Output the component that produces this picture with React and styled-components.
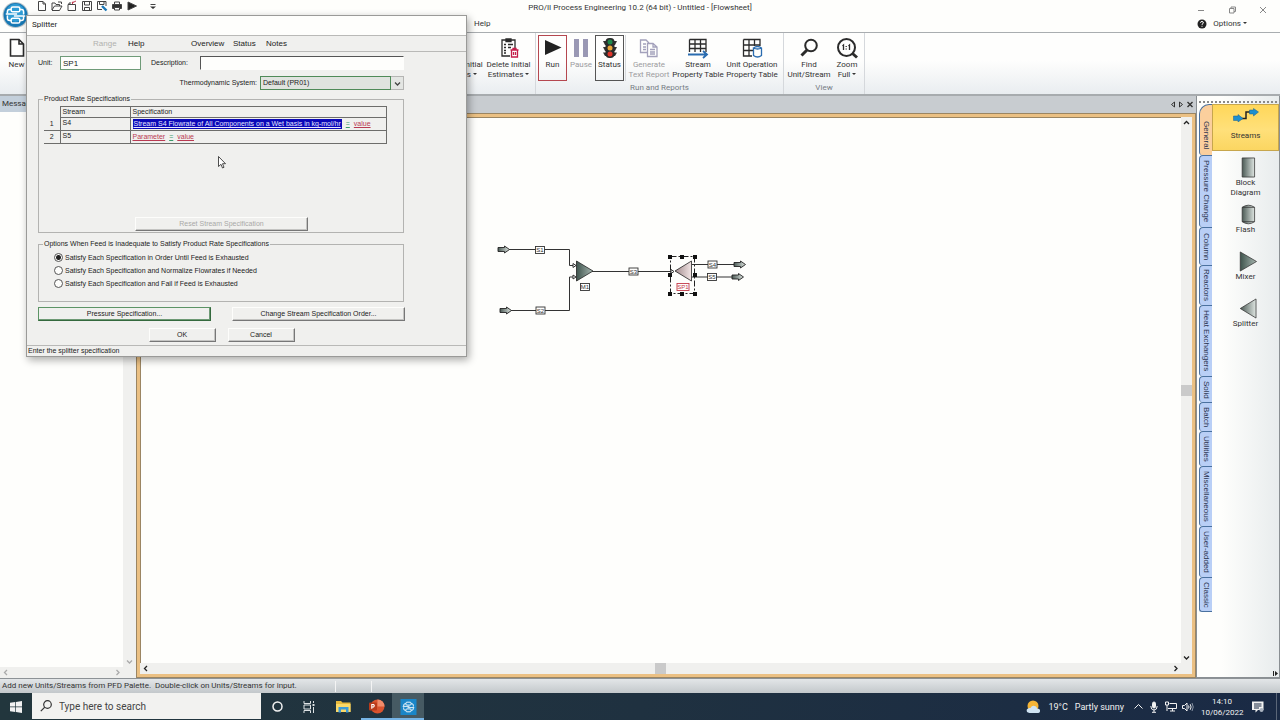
import React, { useState } from 'react';
import styled, { createGlobalStyle, css } from 'styled-components';

const GlobalStyle = createGlobalStyle`
  * {
    box-sizing: border-box;
  }
  body {
    margin: 0;
    background: #fefefc;
    color: #333;
    font-family: Roboto, 'Open Sans', sans-serif;
    font-size: 8px;
    line-height: 10px;
  }
  button, input, select {
    font: inherit;
    color: inherit;
  }
  button {
    margin: 0;
    padding: 0;
    border: none;
    background: none;
  }
  svg {
    display: block;
    flex: none;
  }
`;

const Screen = styled.div`
  position: relative;
  min-height: 100vh;
  display: flex;
  flex-direction: column;
  overflow: hidden;
`;

/* ---------- title bar and menu ---------- */

const TitleBar = styled.header`
  display: grid;
  grid-template-columns: 1fr auto 1fr;
  align-items: center;
  height: 16px;
`;

const QuickAccess = styled.div`
  display: flex;
  align-items: center;
  gap: 3px;
  padding: 0 0 4px 36px;
  button:last-child {
    margin-left: 6px;
  }
`;

const AppTitle = styled.h1`
  margin: 0;
  font-size: 8px;
  font-weight: 400;
`;

const WindowButtons = styled.div`
  display: flex;
  justify-content: flex-end;
  gap: 19px;
  padding: 3px 11px 0 0;
`;

const MenuBar = styled.nav`
  display: flex;
  justify-content: space-between;
  align-items: center;
  height: 17px;
  padding: 0 33px 0 474px;
  border-bottom: 1px solid #a9adb0;
`;

const MenuButton = styled.button`
  display: flex;
  align-items: center;
  gap: 6px;
`;

const AppBadge = styled.div`
  position: absolute;
  left: 2px;
  top: 1px;
`;

const Caret = styled.span`
  display: inline-block;
  margin-left: 2px;
  vertical-align: 2px;
  border: 2px solid transparent;
  border-top-color: #333;
  border-bottom: none;
`;

/* ---------- ribbon ---------- */

const Ribbon = styled.div`
  display: flex;
  height: 63px;
  background: linear-gradient(#fefefd 45%, #e9edf0);
  border-bottom: 2px solid #a7abae;
`;

const Group = styled.section`
  display: flex;
  flex-direction: column;
  justify-content: space-between;
  width: ${p => p.$width}px;
  padding: 2px 0 1px;
  border-right: 1px solid #d5d8dc;
`;

const Tools = styled.div`
  display: flex;
  justify-content: ${p => p.$justify || 'flex-start'};
  height: 46px;
  padding-left: ${p => p.$indent || 0}px;
`;

const GroupName = styled.div`
  color: #777d85;
  text-align: center;
`;

const Tool = styled.button`
  display: flex;
  flex-direction: column;
  align-items: center;
  gap: 1px;
  width: ${p => p.$width}px;
  padding-top: 1px;
  border: 1px solid ${p => p.$border || 'transparent'};
  color: ${p => (p.disabled ? '#9c9ca0' : '#333')};
  white-space: nowrap;
`;

const Divider = styled.span`
  width: 1px;
  margin: 0 1px;
  background: #d5d8dc;
`;

/* ---------- work area ---------- */

const Work = styled.main`
  flex: 1;
  display: grid;
  grid-template-columns: 136px minmax(0, 1fr) 84px;
  background: #f0f0ee;
`;

const Messages = styled.aside`
  display: grid;
  grid-template: 16px 1fr 11px / 1fr 13px;
`;

const PanelTitle = styled.h2`
  grid-column: 1 / -1;
  margin: 0;
  padding: 3px 2px;
  background: #c3cfdb;
  font-size: 8px;
  font-weight: 400;
`;

const MessageList = styled.div`
  background: #fefefc;
`;

const Track = styled.div`
  display: flex;
  flex-direction: ${p => (p.$vertical ? 'column' : 'row')};
  justify-content: ${p => (p.$endOnly ? 'flex-end' : 'space-between')};
  align-items: center;
  padding: ${p => (p.$vertical ? '2px 0' : '0 2px')};
  background: #f0f0ee;
`;

const Thumb = styled.span`
  width: 11px;
  height: 11px;
  background: #cacaca;
`;

const Doc = styled.section`
  display: flex;
  flex-direction: column;
`;

const TabStrip = styled.div`
  display: flex;
  justify-content: flex-end;
  align-items: center;
  height: 17px;
  padding: 0 3px;
  background: #c8ccd0;
`;

const Frame = styled.div`
  flex: 1;
  display: grid;
  grid-template: 1fr 11px / minmax(0, 1fr) 11px;
  border: 4px solid #ebc083;
  outline: 1px solid #9b8562;
  outline-offset: -1px;
  box-shadow: inset 1px 1px 0 #9b8562;
`;

const Canvas = styled.div`
  position: relative;
  margin: 1px 0 0 1px;
  background: #fefefc;
`;

const Flowsheet = styled.svg`
  position: absolute;
  left: 339px;
  top: 112px;
  font-family: 'Liberation Sans', Arial, sans-serif;
  font-size: 6px;
`;

/* ---------- palette ---------- */

const Palette = styled.aside`
  display: grid;
  grid-template: 8px 1fr / 15px 1fr;
  border: 1px solid #8a8f93;
  border-top: none;
  background: linear-gradient(90deg, #fefefc 30%, #e8eced);
`;

const Grip = styled.div`
  grid-column: 1 / -1;
  margin: 5px 2px 0;
  border-top: 2px dotted #8a8a8a;
`;

const Tabs = styled.div`
  display: flex;
  flex-direction: column;
  padding-left: 2px;
`;

const Tab = styled.button`
  height: ${p => p.$size}px;
  padding-top: ${p => (p.$active ? 10 : 0)}px;
  writing-mode: vertical-rl;
  border: 1px solid #4a719f;
  border-right: none;
  border-bottom-width: 0;
  border-radius: ${p => (p.$active ? '10px 0 0 3px' : '4px 0 0 3px')};
  background: ${p => (p.$active ? '#fbcf9d' : '#b9cff6')};
  color: #2c3550;
  font-family: 'Liberation Sans', Arial, sans-serif;
  font-size: 8px;
  text-align: center;
  white-space: nowrap;
  &:last-child {
    border-bottom-width: 1px;
  }
`;

const Items = styled.div`
  display: flex;
  flex-direction: column;
`;

const Item = styled.button`
  display: flex;
  flex-direction: column;
  align-items: center;
  justify-content: flex-start;
  min-height: 47px;
  padding-top: 5px;
  white-space: pre-line;
  ${p =>
    p.$active &&
    css`
      padding-top: 3px;
      gap: 9px;
      margin-bottom: 1px;
      border: 1px solid #c7a64d;
      background: linear-gradient(#ffd75a, #ffe07a 55%, #fbd661);
    `}
`;

const MoreMark = styled.div`
  margin-top: auto;
  padding: 0 1px 1px 0;
  align-self: flex-end;
`;

/* ---------- status bar and taskbar ---------- */

const StatusBar = styled.footer`
  display: flex;
  align-items: center;
  height: 15px;
  padding-left: 2px;
  border-top: 1px solid #8d9296;
  background: linear-gradient(#e3e6e8, #c3c8cb);
`;

const StatusText = styled.span`
  width: 333px;
  white-space: pre;
`;

const StatusCell = styled.span`
  width: 36px;
  height: 11px;
  border-left: 1px solid #f4f4f4;
`;

const Taskbar = styled.footer`
  display: flex;
  align-items: stretch;
  height: 27px;
  background: linear-gradient(90deg, #22363d, #1f3140 50%, #1a2a45);
  color: #f2f2f2;
`;

const TaskButton = styled.button`
  display: flex;
  align-items: center;
  justify-content: center;
  width: ${p => p.$width}px;
  background: ${p => (p.$active ? '#465a63' : 'none')};
  box-shadow: ${p => (p.$open ? 'inset 0 -2px 0 #76b4e6' : 'none')};
`;

const SearchBox = styled.label`
  display: flex;
  align-items: center;
  gap: 7px;
  width: 229px;
  margin-bottom: 1px;
  padding-left: 8px;
  background: #f2f2f0;
  color: #333;
`;

const SearchInput = styled.input`
  flex: 1;
  min-width: 0;
  padding: 0;
  border: none;
  outline: none;
  background: transparent;
  font-size: 10px;
  &::placeholder {
    color: #444;
    opacity: 1;
  }
`;

const Tray = styled.div`
  display: flex;
  align-items: center;
  gap: 5px;
  margin-left: auto;
  padding-right: 3px;
`;

const Weather = styled.button`
  display: flex;
  align-items: center;
  gap: 7px;
  margin-right: 5px;
  font-size: 9px;
`;

const Clock = styled.time`
  width: 42px;
  margin: 0 4px 0 2px;
  font-size: 8px;
  line-height: 11px;
  text-align: center;
`;

const ShowDesktop = styled.span`
  height: 27px;
  margin-left: 7px;
  border-left: 1px solid #5a6678;
`;

/* ---------- splitter dialog ---------- */

const Dialog = styled.form`
  position: absolute;
  left: 26px;
  top: 15px;
  width: 441px;
  border: 1px solid #9a9a98;
  background: #f0f0ee;
  box-shadow: 2px 3px 8px #0005;
  color: #222;
  font-family: 'Liberation Sans', Arial, sans-serif;
  font-size: 7px;
`;

const DialogTitle = styled.h2`
  margin: 0;
  padding: 4px 5px 5px;
  border-bottom: 1px solid #b9b9b7;
  background: #fefefc;
  font-family: Roboto, 'Open Sans', sans-serif;
  font-size: 8px;
  font-weight: 400;
`;

const DialogMenu = styled.nav`
  display: flex;
  height: 16px;
  padding: 1px 0 0 66px;
  border-bottom: 1px solid #b9b9b7;
  font-size: 8px;
`;

const DialogMenuItem = styled.button`
  width: ${p => p.$width}px;
  text-align: left;
  color: ${p => (p.disabled ? '#b0b0ae' : '#222')};
`;

const DialogBody = styled.div`
  padding: 4px 62px 3px 11px;
`;

const UnitRow = styled.div`
  display: grid;
  grid-template-columns: 22px 81px 49px 1fr;
  align-items: center;
  margin-bottom: 6px;
  label:nth-of-type(2) {
    margin-left: 10px;
  }
  grid-template-columns: 22px 81px 59px 1fr;
`;

const ThermoRow = styled.div`
  display: flex;
  align-items: center;
  justify-content: flex-end;
  gap: 3px;
  margin-bottom: 4px;
`;

const TextField = styled.input`
  min-width: 0;
  height: 14px;
  padding: 0 2px;
  outline: none;
  background: #fefefc;
  border: 1px solid #6f9b78;
  font-size: 8px;
  ${p =>
    p.$sunken &&
    css`
      border-color: #555 #fefefc #fefefc #555;
    `}
`;

const SelectWrap = styled.span`
  display: flex;
  align-items: center;
  width: 144px;
  height: 14px;
  border: 1px solid #b5b5b3;
  background: #e4e6e3;
  select {
    flex: 1;
    height: 14px;
    margin: -1px 3px -1px -1px;
    padding: 0 2px;
    appearance: none;
    border: 1px solid #4f8a58;
    border-radius: 0;
    outline: none;
    background: #e0e3df;
  }
  svg {
    margin-right: 2px;
  }
`;

const GroupBox = styled.fieldset`
  min-width: 0;
  margin: 0 0 ${p => p.$after}px;
  padding: 2px 5px ${p => p.$bottom}px;
  border: 1px solid #b3b3b1;
  legend {
    padding: 0 1px;
    margin-left: -1px;
  }
`;

const SpecArea = styled.div`
  min-height: 111px;
`;

const SpecTable = styled.table`
  width: 343px;
  border-collapse: collapse;
  table-layout: fixed;
  th,
  td {
    height: 13px;
    padding: 0 2px;
    border: 1px solid #6d6d6b;
    font-weight: 400;
    text-align: left;
    white-space: nowrap;
  }
  thead th {
    height: 11px;
  }
  thead td {
    height: 11px;
    border: none;
  }
  tbody th {
    border-left: none;
    border-top: none;
    text-align: center;
  }
  col:nth-child(1) {
    width: 16px;
  }
  col:nth-child(2) {
    width: 70px;
  }
`;

const StreamCell = styled.td`
  vertical-align: top;
`;

const SpecLink = styled.a`
  margin-right: 4px;
  color: ${p => (p.$op ? '#3a9a6a' : '#b93a52')};
  text-decoration: underline;
`;

const SelectedSpec = styled(SpecLink)`
  display: inline-block;
  padding: 0 1px;
  background: #0a08b8;
  color: #e6e6ff;
`;

const PushButton = styled.button`
  width: ${p => p.$width}px;
  height: 14px;
  border: 1px solid;
  border-color: #fdfdfb #777 #777 #fdfdfb;
  box-shadow: inset -1px -1px 0 #c4c4c2;
  color: ${p => (p.disabled ? '#a9a9a7' : '#222')};
  ${p =>
    p.$default &&
    css`
      border-color: #5c9465 #34693d #34693d #5c9465;
      box-shadow: inset -1px -1px 0 #6e9a75;
    `}
`;

const ButtonRow = styled.div`
  display: flex;
  justify-content: ${p => p.$justify || 'space-between'};
  gap: 12px;
  margin: 0 -1px ${p => p.$after || 0}px 0;
`;

const RadioRow = styled.label`
  display: flex;
  align-items: center;
  gap: 2px;
  height: 13px;
  padding-left: 10px;
  input {
    width: 9px;
    height: 9px;
    margin: 0;
    appearance: none;
    border: 1px solid #555;
    border-radius: 50%;
    background: #fefefc;
  }
  input:checked {
    background: radial-gradient(#222 2px, #fefefc 3px);
  }
`;

const Hint = styled.div`
  height: 11px;
  padding-left: 1px;
  border-top: 1px solid #b9b9b7;
`;

const Cursor = styled.svg`
  position: absolute;
  left: 218px;
  top: 156px;
`;

/* ---------- drawings ---------- */

const Arrow = ({ dir = 'down', color = '#444' }) => {
  const paths = {
    up: 'M1 5 L3.5 2.5 L6 5',
    down: 'M1 2.5 L3.5 5 L6 2.5',
    left: 'M5 1 L2.5 3.5 L5 6',
    right: 'M2.5 1 L5 3.5 L2.5 6',
  };
  return (
    <svg width="7" height="7" viewBox="0 0 7 7" fill="none" stroke={color} strokeWidth="1.3">
      <path d={paths[dir]} />
    </svg>
  );
};

const Loops = () => (
  <g fill="none" stroke="#fff" strokeWidth="1.4">
    <rect x="8.5" y="5" width="8" height="4.5" rx="1.5" />
    <rect x="8.5" y="15.5" width="8" height="4.5" rx="1.5" />
    <path d="M8.5 7.5 H7 Q5 7.5 5 9.5 V11 M16.5 7.5 H18 Q20 7.5 20 9.5 V12" />
    <path d="M3.5 11.5 H14 M11 13.5 H21.5 M5 13 V15.5 Q5 17.5 7 17.5 H8.5 M20 14 V15.5 Q20 17.5 18 17.5 H16.5" />
  </g>
);

const BadgeIcon = () => (
  <svg width="27" height="28" viewBox="0 0 25 25">
    <circle cx="12.5" cy="12.5" r="12" fill="#b9c4ca" />
    <circle cx="12.5" cy="12.5" r="11" fill="#1778b4" />
    <circle cx="12.5" cy="10.5" r="8.5" fill="#2e9bd4" />
    <Loops />
  </svg>
);

const quickIcons = [
  <path key="new" d="M2.5 1.5 H7 L9.5 4 V10.5 H2.5 Z M7 1.5 V4 H9.5" />,
  <path key="open" d="M1 10 V3 H4 L5 4.5 H8.5 V6 M1 10 L3.5 6 H11 L8.5 10.5 H1 M7 2 H10.5 V4" />,
  <g key="close">
    <path d="M2 10.5 V4.5 H9.5 V10.5 Z M3 4.5 V3 H5" />
    <path d="M6 3 L10 1 M7 4 L6 3 L7 1.5" stroke="#c0394f" />
  </g>,
  <path key="save" d="M1.5 1.5 H10.5 V10.5 H1.5 Z M3.5 1.5 V5 H8.5 V1.5 M3.5 10.5 V7.5 H8.5 V10.5" />,
  <g key="saveas">
    <path d="M1.5 1.5 H10 V6 M1.5 1.5 V9.5 H6 M3.5 1.5 V4.5 H8 V1.5" />
    <path d="M6 6 L10.5 10.5" stroke="#1f7ab8" strokeWidth="2.4" />
  </g>,
  <g key="print" fill="#333">
    <path d="M1.5 4.5 H10.5 V8.5 H1.5 Z" />
    <path d="M3.5 4 V2 H8.5 V4 M3.5 7.5 H8.5 V10 H3.5 Z" fill="#fff" />
  </g>,
  <path key="run" d="M2 2 L10.5 6 L2 10 Z" fill="#222" />,
];

const QuickIcon = ({ children, stroke = '#444' }) => (
  <svg width="12" height="12" viewBox="0 0 12 12" fill="none" stroke={stroke} strokeWidth="1">
    {children}
  </svg>
);

const ToolSvg = ({ children, stroke = '#2b2b2b' }) => (
  <svg width="22" height="22" viewBox="0 0 22 22" fill="none" stroke={stroke} strokeWidth="1.3">
    {children}
  </svg>
);

const NewIcon = () => (
  <ToolSvg>
    <path d="M4.5 2.5 H13 L17.5 7 V19 H4.5 Z M13 2.5 V7 H17.5" strokeWidth="1.6" />
  </ToolSvg>
);

const DeleteIcon = () => (
  <ToolSvg>
    <path d="M12 19 H4 V3 H17 V11 M8 2 H13 V4.5 H8 Z" />
    <path d="M6 7.5 H8 M10 7.5 H15 M6 10.5 H8 M10 10.5 H13 M6 13.5 H8 M6 16 H8" />
    <path d="M12.5 13 H20.5 M15 13 V11.5 H18 V13 M13.5 13 V20 H19.5 V13 M15.5 15 V18 M17.5 15 V18" stroke="#c41e4a" />
  </ToolSvg>
);

const RunIcon = () => (
  <ToolSvg>
    <path d="M3 3 L19.5 10.5 L3 18 Z" fill="#222" stroke="none" />
  </ToolSvg>
);

const PauseIcon = () => (
  <ToolSvg>
    <path d="M4 2 H9 V20 H4 Z M13 2 H18 V20 H13 Z" fill="#9a98b4" stroke="none" />
  </ToolSvg>
);

const StatusIcon = () => (
  <ToolSvg stroke="none">
    <path d="M4 4 H18 L16 8 H6 Z M4 10 H18 L16 14 H6 Z M4 15.5 H18 L16 19 H6 Z" fill="#333" />
    <rect x="6.5" y="1" width="9" height="20" rx="4" fill="#2b2b2b" />
    <circle cx="11" cy="5" r="2.5" fill="#1f8a4c" />
    <circle cx="11" cy="11" r="2.5" fill="#eaa63a" />
    <circle cx="11" cy="17" r="2.5" fill="#e0352b" />
  </ToolSvg>
);

const ReportIcon = () => (
  <ToolSvg stroke="#a3a1bb">
    <path d="M9 15.5 H2.5 V3 H8 L11 6 M5 7 H8 M5 10 H8 M5 12.5 H8" />
    <path d="M9.5 6.5 H15 L19 10 V19.5 H9.5 Z M15 6.5 V10 H19 M12 12.5 H17 M12 15 H17 M12 17 H17" />
  </ToolSvg>
);

const StreamTableIcon = () => (
  <ToolSvg>
    <path d="M2.5 2.5 H19 V15 M2.5 2.5 V15 M8 2.5 V15 M13.5 2.5 V15 M2.5 7 H19 M2.5 11.5 H19" />
    <path d="M1 17.5 H19 M16 14 L20 17.5 L16 21" stroke="#2a6cb0" strokeWidth="1.8" />
  </ToolSvg>
);

const UnitTableIcon = () => (
  <ToolSvg>
    <path d="M2.5 2.5 H19 V9 M2.5 2.5 V19 H11 M8 2.5 V19 M13.5 2.5 V9 M2.5 8 H19 M2.5 13.5 H12" />
    <path d="M12.5 11 V18.5 Q16.5 21.5 20.5 18.5 V11 Q16.5 8 12.5 11 Q16.5 13 20.5 11" fill="#fefefc" stroke="#2a6cb0" />
  </ToolSvg>
);

const FindIcon = () => (
  <ToolSvg>
    <circle cx="13" cy="8.5" r="5.8" strokeWidth="2" />
    <path d="M9 13 L3.5 18.5" strokeWidth="3" />
  </ToolSvg>
);

const ZoomIcon = () => (
  <ToolSvg>
    <circle cx="10.5" cy="10.5" r="8.5" strokeWidth="2" />
    <path d="M16.5 16.5 L21 20.5" strokeWidth="3" />
    <path d="M6.5 9 L7.5 8 V13 M12.5 9 L13.5 8 V13 M10.2 9 V10 M10.2 11.5 V12.5" />
  </ToolSvg>
);

const Gradients = () => (
  <svg width="0" height="0">
    <defs>
      <linearGradient id="steel">
        <stop offset="0" stopColor="#4b5a55" />
        <stop offset="1" stopColor="#dfe6e2" />
      </linearGradient>
      <linearGradient id="mixer">
        <stop offset="0" stopColor="#3f544d" />
        <stop offset="1" stopColor="#a9b8b2" />
      </linearGradient>
      <linearGradient id="rose">
        <stop offset="0" stopColor="#a08a8c" />
        <stop offset="1" stopColor="#f3e6e6" />
      </linearGradient>
    </defs>
  </svg>
);

const StreamsIcon = () => (
  <svg width="28" height="14" viewBox="0 0 28 14">
    <path d="M9 10.5 H14 V4 H20" fill="none" stroke="#222" strokeWidth="1.5" />
    <path d="M1.5 8 H6 V6.5 L11 10.5 L6 14 V12.5 H1.5 Z" fill="#1d8fd0" stroke="#1b5f8a" strokeWidth=".5" />
    <path d="M17.5 2 H21.5 V0.5 L26.5 4 L21.5 8 V6 H17.5 Z" fill="#1d8fd0" stroke="#1b5f8a" strokeWidth=".5" />
  </svg>
);

const ShapeIcon = ({ children }) => (
  <svg width="22" height="21" viewBox="0 0 22 22" fill="url(#steel)" stroke="#333" strokeWidth=".8">
    {children}
  </svg>
);

const Port = ({ x, y }) => (
  <path
    transform={`translate(${x} ${y})`}
    d="M0 -2 H6.5 V-3.5 L11.5 0 L6.5 3.5 V2 H0 Z"
    fill="url(#steel)"
    stroke="#222"
    strokeWidth=".9"
  />
);

const Tag = ({ x, y, label, color = '#333', width = 9 }) => (
  <g>
    <rect x={x - width / 2} y={y - 3.5} width={width} height="7" fill="#fefefc" stroke={color} strokeWidth=".9" />
    <text x={x} y={y + 2} fill={color} textAnchor="middle">
      {label}
    </text>
  </g>
);

const handles = [
  [190, 27],
  [202, 27],
  [215, 27],
  [190, 45],
  [215, 45],
  [190, 64],
  [202, 64],
  [215, 64],
];

const Diagram = () => (
  <Flowsheet width="290" height="100" viewBox="0 0 290 100">
    <g fill="none" stroke="#333" strokeWidth="1">
      <path d="M29 19.5 H89.5 V35.5 H94 M31 80.5 H89.5 V47 H94" />
      <path d="M112 41.5 H191 M212 34.5 H255 M212 47 H253" />
      <path d="M93 33.5 L96 35.5 L93 37.5 Z M93 45 L96 47 L93 49 Z M191 39.5 L194 41.5 L191 43.5 Z" fill="#fff" />
    </g>
    <Port x={18} y={19.5} />
    <Port x={20} y={80.5} />
    <Port x={254} y={34.5} />
    <Port x={252} y={47} />
    <path d="M96.5 31 L113 41 L96.5 51 Z" fill="url(#mixer)" stroke="#222" strokeWidth=".8" />
    <path d="M211.5 31 L195 41 L211.5 51 Z" fill="url(#rose)" stroke="#222" strokeWidth=".8" />
    <rect x="190.5" y="26.5" width="24" height="37" fill="none" stroke="#222" strokeDasharray="6 2 2 2" />
    {handles.map(([x, y]) => (
      <rect key={`${x}-${y}`} x={x - 2} y={y - 2} width="4" height="4" fill="#111" />
    ))}
    <Tag x={60} y={20} label="S1" />
    <Tag x={60.5} y={80.5} label="S2" />
    <Tag x={153.5} y={41.5} label="S3" />
    <Tag x={232.5} y={34.5} label="S4" />
    <Tag x={232} y={47} label="S5" />
    <Tag x={105} y={57} label="M1" />
    <Tag x={203} y={57} label="SP1" color="#c33a4a" width={12} />
  </Flowsheet>
);

const paletteTabs = [
  ['General', 51],
  ['Pressure Change', 72],
  ['Column', 38],
  ['Reactors', 40],
  ['Heat Exchangers', 71],
  ['Solid', 26],
  ['Batch', 29],
  ['Utilities', 35],
  ['Miscellaneous', 60],
  ['User-added', 51],
  ['Classic', 35],
];

const feedOptions = [
  'Satisfy Each Specification in Order Until Feed is Exhausted',
  'Satisfy Each Specification and Normalize Flowrates if Needed',
  'Satisfy Each Specification and Fail if Feed is Exhausted',
];

const SplitterDialog = () => {
  const [unit, setUnit] = useState('SP1');
  const [description, setDescription] = useState('');
  const [option, setOption] = useState(0);

  return (
    <Dialog onSubmit={e => e.preventDefault()}>
      <DialogTitle>Splitter</DialogTitle>
      <DialogMenu>
        <DialogMenuItem type="button" $width={35} disabled>
          Range
        </DialogMenuItem>
        <DialogMenuItem type="button" $width={63}>
          Help
        </DialogMenuItem>
        <DialogMenuItem type="button" $width={42}>
          Overview
        </DialogMenuItem>
        <DialogMenuItem type="button" $width={33}>
          Status
        </DialogMenuItem>
        <DialogMenuItem type="button" $width={30}>
          Notes
        </DialogMenuItem>
      </DialogMenu>
      <DialogBody>
        <UnitRow>
          <label htmlFor="unit">Unit:</label>
          <TextField id="unit" value={unit} onChange={e => setUnit(e.target.value)} />
          <label htmlFor="description">Description:</label>
          <TextField
            id="description"
            $sunken
            value={description}
            onChange={e => setDescription(e.target.value)}
          />
        </UnitRow>
        <ThermoRow>
          <label htmlFor="thermo">Thermodynamic System:</label>
          <SelectWrap>
            <select id="thermo">
              <option>Default (PR01)</option>
            </select>
            <Arrow />
          </SelectWrap>
        </ThermoRow>
        <GroupBox $after={6} $bottom={1}>
          <legend>Product Rate Specifications</legend>
          <SpecArea>
            <SpecTable>
              <colgroup>
                <col />
                <col />
                <col />
              </colgroup>
              <thead>
                <tr>
                  <td />
                  <th>Stream</th>
                  <th>Specification</th>
                </tr>
              </thead>
              <tbody>
                <tr>
                  <th>1</th>
                  <StreamCell>S4</StreamCell>
                  <td>
                    <SelectedSpec href="#s4">
                      Stream S4 Flowrate of All Components on a Wet basis in kg-mol/hr
                    </SelectedSpec>
                    <SpecLink href="#s4-op" $op>
                      =
                    </SpecLink>
                    <SpecLink href="#s4-value">value</SpecLink>
                  </td>
                </tr>
                <tr>
                  <th>2</th>
                  <StreamCell>S5</StreamCell>
                  <td>
                    <SpecLink href="#s5">Parameter</SpecLink>
                    <SpecLink href="#s5-op" $op>
                      =
                    </SpecLink>
                    <SpecLink href="#s5-value">value</SpecLink>
                  </td>
                </tr>
              </tbody>
            </SpecTable>
          </SpecArea>
          <ButtonRow $justify="center">
            <PushButton type="button" $width={173} disabled>
              Reset Stream Specification
            </PushButton>
          </ButtonRow>
        </GroupBox>
        <GroupBox $after={5} $bottom={11}>
          <legend>Options When Feed is Inadequate to Satisfy Product Rate Specifications</legend>
          {feedOptions.map((text, i) => (
            <RadioRow key={text}>
              <input type="radio" name="feed" checked={option === i} onChange={() => setOption(i)} />
              {text}
            </RadioRow>
          ))}
        </GroupBox>
        <ButtonRow $after={7}>
          <PushButton type="button" $width={173} $default>
            Pressure Specification...
          </PushButton>
          <PushButton type="button" $width={173}>
            Change Stream Specification Order...
          </PushButton>
        </ButtonRow>
        <ButtonRow $justify="center">
          <PushButton type="submit" $width={67}>
            OK
          </PushButton>
          <PushButton type="button" $width={67}>
            Cancel
          </PushButton>
        </ButtonRow>
      </DialogBody>
      <Hint>Enter the splitter specification</Hint>
    </Dialog>
  );
};

const App = () => {
  return (
    <Screen>
      <GlobalStyle />
      <Gradients />
      <TitleBar>
        <QuickAccess>
          {quickIcons.map(icon => (
            <button type="button" key={icon.key}>
              <QuickIcon>{icon}</QuickIcon>
            </button>
          ))}
          <button type="button">
            <QuickIcon>
              <path d="M3.5 4.5 H8.5" />
              <path d="M3 6.5 H9 L6 9 Z" fill="#333" stroke="none" />
            </QuickIcon>
          </button>
        </QuickAccess>
        <AppTitle>PRO/II Process Engineering 10.2 (64 bit) - Untitled - [Flowsheet]</AppTitle>
        <WindowButtons>
          <button type="button">
            <QuickIcon stroke="#888">
              <path d="M3 6.5 H9" />
            </QuickIcon>
          </button>
          <button type="button">
            <QuickIcon stroke="#888">
              <path d="M3.5 4.5 H8 V9 H3.5 Z M5 4.5 V3 H9.5 V7.5 H8" />
            </QuickIcon>
          </button>
          <button type="button">
            <QuickIcon stroke="#888">
              <path d="M3 3 L9 9 M9 3 L3 9" />
            </QuickIcon>
          </button>
        </WindowButtons>
      </TitleBar>
      <MenuBar>
        <MenuButton type="button">Help</MenuButton>
        <MenuButton type="button">
          <svg width="10" height="10" viewBox="0 0 10 10">
            <circle cx="5" cy="5" r="4.5" fill="#222" />
            <path
              d="M3.5 3.8 Q3.7 2.3 5.1 2.4 Q6.6 2.6 6.3 4 Q5.2 4.9 5 5.9 M5 6.8 V7.8"
              fill="none"
              stroke="#fff"
            />
          </svg>
          <span>
            Options
            <Caret />
          </span>
        </MenuButton>
      </MenuBar>
      <AppBadge>
        <BadgeIcon />
      </AppBadge>

      <Ribbon>
        <Group $width={536}>
          <Tools $justify="space-between">
            <Tool type="button" $width={33}>
              <NewIcon />
              New
            </Tool>
            <Tools>
              <Tool type="button" $width={52}>
                <DeleteIcon />
                <span>
                  Generate Initial
                  <br />
                  Estimates
                  <Caret />
                </span>
              </Tool>
              <Tool type="button" $width={53}>
                <DeleteIcon />
                <span>
                  Delete Initial
                  <br />
                  Estimates
                  <Caret />
                </span>
              </Tool>
            </Tools>
          </Tools>
        </Group>
        <Group $width={248}>
          <Tools $indent={2}>
            <Tool type="button" $width={29} $border="#b5474f">
              <RunIcon />
              Run
            </Tool>
            <Tool type="button" $width={28} disabled>
              <PauseIcon />
              Pause
            </Tool>
            <Tool type="button" $width={29} $border="#555">
              <StatusIcon />
              Status
            </Tool>
            <Divider />
            <Tool type="button" $width={44} disabled>
              <ReportIcon />
              <span>
                Generate
                <br />
                Text Report
              </span>
            </Tool>
            <Tool type="button" $width={54}>
              <StreamTableIcon />
              <span>
                Stream
                <br />
                Property Table
              </span>
            </Tool>
            <Tool type="button" $width={54}>
              <UnitTableIcon />
              <span>
                Unit Operation
                <br />
                Property Table
              </span>
            </Tool>
          </Tools>
          <GroupName>Run and Reports</GroupName>
        </Group>
        <Group $width={81}>
          <Tools>
            <Tool type="button" $width={50}>
              <FindIcon />
              <span>
                Find
                <br />
                Unit/Stream
              </span>
            </Tool>
            <Tool type="button" $width={26}>
              <ZoomIcon />
              <span>
                Zoom
                <br />
                Full
                <Caret />
              </span>
            </Tool>
          </Tools>
          <GroupName>View</GroupName>
        </Group>
      </Ribbon>

      <Work>
        <Messages>
          <PanelTitle>Messages</PanelTitle>
          <MessageList />
          <Track $vertical $endOnly>
            <Arrow color="#aaa" />
          </Track>
          <Track>
            <Arrow dir="left" color="#aaa" />
            <Arrow dir="right" color="#aaa" />
          </Track>
        </Messages>

        <Doc>
          <TabStrip>
            <svg width="24" height="7" viewBox="0 0 24 7" fill="none" stroke="#333" strokeWidth="1">
              <path d="M5.5 1 V6 L2.5 3.5 Z M10.5 1 V6 L13.5 3.5 Z" />
              <path d="M18.5 1 L23.5 6 M23.5 1 L18.5 6" strokeWidth="1.4" />
            </svg>
          </TabStrip>
          <Frame>
            <Canvas>
              <Diagram />
            </Canvas>
            <Track $vertical>
              <Arrow dir="up" color="#222" />
              <Thumb />
              <Arrow color="#222" />
            </Track>
            <Track>
              <Arrow dir="left" color="#222" />
              <Thumb />
              <Arrow dir="right" color="#222" />
            </Track>
          </Frame>
        </Doc>

        <Palette>
          <Grip />
          <Tabs>
            {paletteTabs.map(([name, size], i) => (
              <Tab type="button" key={name} $size={size} $active={i === 0}>
                {name}
              </Tab>
            ))}
          </Tabs>
          <Items>
            <Item type="button" $active>
              <StreamsIcon />
              Streams
            </Item>
            <Item type="button">
              <ShapeIcon>
                <path d="M7 1 H20 V21 H7 Z" />
              </ShapeIcon>
              {'Block\nDiagram'}
            </Item>
            <Item type="button">
              <ShapeIcon>
                <path d="M7 3.5 Q13.5 -1 20 3.5 V18.5 Q13.5 23 7 18.5 Z M7 3.5 H20 M7 18.5 H20" />
              </ShapeIcon>
              Flash
            </Item>
            <Item type="button">
              <ShapeIcon>
                <path d="M5 1 L22 11 L5 21 Z" fill="url(#mixer)" />
              </ShapeIcon>
              Mixer
            </Item>
            <Item type="button">
              <ShapeIcon>
                <path d="M21.5 1 L5 11 L21.5 21 Z" />
              </ShapeIcon>
              Splitter
            </Item>
            <MoreMark>
              <svg width="5" height="5" viewBox="0 0 5 5">
                <path d="M0 0 H1 V5 H0 Z M2 0 L5 2.5 L2 5 Z" fill="#222" />
              </svg>
            </MoreMark>
          </Items>
        </Palette>
      </Work>

      <StatusBar>
        <StatusText>{'Add new Units/Streams from PFD Palette.  Double-click on Units/Streams for input.'}</StatusText>
        <StatusCell />
        <StatusCell />
      </StatusBar>

      <Taskbar>
        <TaskButton type="button" $width={32}>
          <svg width="12" height="12" viewBox="0 0 12 12" fill="#f2f2f2">
            <path d="M0 1.7 L5.3 1 V5.6 H0 Z M6 .9 L12 0 V5.6 H6 Z M0 6.3 H5.3 V11 L0 10.3 Z M6 6.3 H12 V12 L6 11.1 Z" />
          </svg>
        </TaskButton>
        <SearchBox>
          <svg width="12" height="12" viewBox="0 0 12 12" fill="none" stroke="#333" strokeWidth="1.2">
            <circle cx="7.5" cy="4.5" r="3.8" />
            <path d="M4.8 7.2 L.8 11.2" />
          </svg>
          <SearchInput type="text" placeholder="Type here to search" />
        </SearchBox>
        <TaskButton type="button" $width={32}>
          <svg width="11" height="11" viewBox="0 0 11 11" fill="none" stroke="#f2f2f2" strokeWidth="1.5">
            <circle cx="5.5" cy="5.5" r="4.5" />
          </svg>
        </TaskButton>
        <TaskButton type="button" $width={32}>
          <svg width="12" height="12" viewBox="0 0 12 12" fill="none" stroke="#dde2e4">
            <path d="M1 0 V2.5 H7.5 V0 M1 4 H7.5 V8 H1 Z M1 12 V9.5 H7.5 V12 M10.5 0 V2 M10.5 6 V12" />
            <path d="M9.5 3 H11.5 V5 H9.5 Z" fill="#dde2e4" stroke="none" />
          </svg>
        </TaskButton>
        <TaskButton type="button" $width={36}>
          <svg width="15" height="13" viewBox="0 0 15 13">
            <path d="M0 1 H5 L6.5 2.5 H14.5 V12 H0 Z" fill="#e8b93c" />
            <path d="M0 4 H14.5 V12 H0 Z" fill="#fbd968" />
            <path d="M2.5 12.5 V7 H12.5 V12.5 H10 V9.5 H5 V12.5 Z" fill="#3d9bd8" />
          </svg>
        </TaskButton>
        <TaskButton type="button" $width={31} $open>
          <svg width="17" height="15" viewBox="0 0 17 15">
            <circle cx="9.5" cy="7.5" r="7" fill="#d9532f" />
            <path d="M9.5 .5 A7 7 0 0 1 16.5 7.5 H9.5 Z" fill="#f08b6a" />
            <rect x="1" y="3.5" width="8" height="8" rx="1" fill="#b93a1a" />
            <path d="M3.8 9.8 V5.5 H5.5 Q7 6.7 5.5 8 H3.8" fill="none" stroke="#fff" strokeWidth="1.1" />
          </svg>
        </TaskButton>
        <TaskButton type="button" $width={32} $active $open>
          <svg width="17" height="16" viewBox="0 0 25 25">
            <rect width="25" height="25" fill="#1a86c8" />
            <Loops />
          </svg>
        </TaskButton>
        <Tray>
          <Weather type="button">
            <svg width="15" height="14" viewBox="0 0 15 14">
              <circle cx="7" cy="6" r="5.5" fill="#f4b436" />
              <path
                d="M3.5 13 Q0 12.5 .8 9.5 Q2 7.5 4.5 8 Q6 4.8 9.5 6.2 Q11 7 11 8.5 Q14.5 8.5 14 11.5 Q13.5 13 12 13 Z"
                fill="#cfe3f2"
              />
            </svg>
            <span>19°C</span>
            <span>Partly sunny</span>
          </Weather>
          <svg width="9" height="9" viewBox="0 0 9 9" fill="none" stroke="#f2f2f2">
            <path d="M.5 6.5 L4.5 2.5 L8.5 6.5" />
          </svg>
          <svg width="12" height="12" viewBox="0 0 12 12" fill="none" stroke="#f2f2f2">
            <rect x="4.5" y="1" width="3" height="6" rx="1.5" fill="#f2f2f2" />
            <path d="M2.8 5 Q2.8 9 6 9 Q9.2 9 9.2 5 M6 9 V11 M4 11.3 H8" />
          </svg>
          <svg width="12" height="11" viewBox="0 0 12 11" fill="none" stroke="#f2f2f2">
            <path d="M4.5 2.5 H11.5 V7.5 H3 M7.5 8 V10 M5 10 H10 M.5 1 V4 H3.5 V1 Z M2 4 V10" />
          </svg>
          <svg width="12" height="10" viewBox="0 0 12 10" fill="none" stroke="#f2f2f2">
            <path d="M.5 3.5 H2.5 L5 1 V9 L2.5 6.5 H.5 Z M6.5 3.5 Q7.5 5 6.5 6.5 M8.2 2.2 Q10 5 8.2 7.8" />
            <path d="M10 1 Q12.5 5 10 9" stroke="#8a95a5" />
          </svg>
          <Clock>
            14:10
            <br />
            10/06/2022
          </Clock>
          <svg width="12" height="12" viewBox="0 0 12 12">
            <path d="M0 .5 H11.5 V9 H6 L3.5 11.5 V9 H0 Z" fill="#f2f2f2" />
            <path d="M2 3 H9.5 M2 5 H9.5 M2 7 H7" stroke="#1a2a45" />
            <circle cx="9.5" cy="9" r="2" fill="#aab3c0" />
          </svg>
          <ShowDesktop />
        </Tray>
      </Taskbar>

      <SplitterDialog />
      <Cursor width="8" height="13" viewBox="0 0 8 13">
        <path d="M.5 .5 V10.5 L3 8.3 L4.5 12 L6 11.3 L4.5 7.7 H7.5 Z" fill="#fff" stroke="#222" strokeWidth=".8" />
      </Cursor>
    </Screen>
  );
};

export default App;
